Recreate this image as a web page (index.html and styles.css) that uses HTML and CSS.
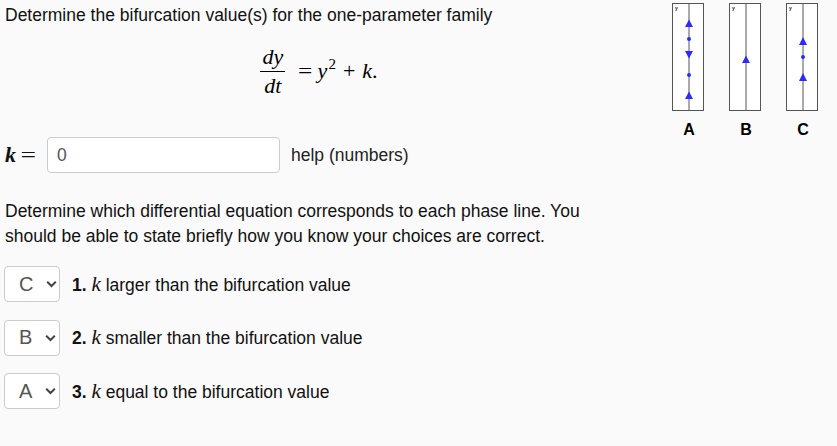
FILE: index.html
```html
<!DOCTYPE html>
<html>
<head>
<meta charset="utf-8">
<link rel="stylesheet" href="styles.css">
</head>
<body>
<div class="page">
  <svg class="phase" width="170" height="140" viewBox="660 0 170 140">
    <g class="box">
      <rect x="672.5" y="3.5" width="31" height="107"/>
      <line x1="689" y1="3.5" x2="689" y2="110.5"/>
      <rect x="729.5" y="3.5" width="31" height="107"/>
      <line x1="746" y1="3.5" x2="746" y2="110.5"/>
      <rect x="786.5" y="3.5" width="31" height="107"/>
      <line x1="803" y1="3.5" x2="803" y2="110.5"/>
    </g>
    <g class="ylab">
      <text x="675" y="10">y</text>
      <text x="732" y="10">y</text>
      <text x="789" y="10">y</text>
    </g>
    <g class="mark">
      <polygon points="689,19.5 685,27 693,27"/>
      <circle cx="689" cy="39" r="2"/>
      <polygon points="689,58.5 685,51 693,51"/>
      <circle cx="689" cy="75" r="2"/>
      <polygon points="689,91.5 685,99 693,99"/>
      <polygon points="746,55.5 742,63 750,63"/>
      <polygon points="803,37 799,45 807,45"/>
      <circle cx="803" cy="57" r="2"/>
      <polygon points="803,73 799,81 807,81"/>
    </g>
    <g class="lab">
      <text x="689" y="135">A</text>
      <text x="746" y="135">B</text>
      <text x="803" y="135">C</text>
    </g>
  </svg>

  <p class="intro">Determine the bifurcation value(s) for the one-parameter family</p>
  <div class="display">
    <span class="math">
      <span class="frac"><span class="num">dy</span><span class="den">dt</span></span>
      <span class="rel">=</span><span class="msup"><span class="mi">y</span><sup class="sup">2</sup></span><span class="op">+</span><span class="mi">k</span><span class="dot">.</span>
    </span>
  </div>

  <div class="answer-row">
    <span class="kvar"><span class="mi">k</span><span class="rel">=</span></span>
    <span class="field">0</span>
    <span class="help">help (numbers)</span>
  </div>

  <p class="para">Determine which differential equation corresponds to each phase line. You should be able to state briefly how you know your choices are correct.</p>

  <div class="matches">
    <div class="match">
      <span class="sel">C<svg class="chev" width="11" height="8" viewBox="0 0 11 8"><path d="M1.2 1.8 L5.5 6 L9.8 1.8"/></svg></span>
      <span class="desc"><b>1.</b> <span class="mi">k</span> larger than the bifurcation value</span>
    </div>
    <div class="match">
      <span class="sel">B<svg class="chev" width="11" height="8" viewBox="0 0 11 8"><path d="M1.2 1.8 L5.5 6 L9.8 1.8"/></svg></span>
      <span class="desc"><b>2.</b> <span class="mi">k</span> smaller than the bifurcation value</span>
    </div>
    <div class="match">
      <span class="sel">A<svg class="chev" width="11" height="8" viewBox="0 0 11 8"><path d="M1.2 1.8 L5.5 6 L9.8 1.8"/></svg></span>
      <span class="desc"><b>3.</b> <span class="mi">k</span> equal to the bifurcation value</span>
    </div>
  </div>
</div>
</body>
</html>
```
FILE: styles.css
```css
html, body {
  margin: 0;
  padding: 0;
  background: #fafafa;
}
body {
  font-family: "Liberation Sans", Arial, sans-serif;
  font-size: 17.5px;
  color: #111;
}
.page {
  padding: 0 5px;
}
.phase {
  float: right;
  margin-right: 2px;
}
.box rect {
  fill: #fff;
  stroke: #555;
  stroke-width: 1;
}
.box line {
  stroke: #555;
  stroke-width: 1;
}
.ylab text {
  font-family: "Liberation Sans", Arial, sans-serif;
  font-size: 5px;
  font-weight: bold;
  fill: #222;
}
.mark polygon, .mark circle {
  fill: #2b2bff;
}
.lab text {
  font-family: "Liberation Sans", Arial, sans-serif;
  font-size: 16px;
  font-weight: bold;
  text-anchor: middle;
  fill: #000;
}
.intro {
  margin: 0;
  padding-top: 3px;
  line-height: 25px;
}
.display {
  display: flex;
  justify-content: center;
  align-items: center;
  height: 86px;
  padding-right: 27px;
}
.math {
  font-family: "Liberation Serif", "Times New Roman", serif;
  font-size: 22px;
  display: inline-flex;
  align-items: center;
  color: #000;
}
.mi, .num, .den {
  font-style: italic;
}
.frac {
  display: inline-flex;
  flex-direction: column;
  align-items: center;
  margin-right: 8px;
}
.num {
  padding: 0 2px 2px;
  border-bottom: 1px solid #000;
  line-height: 24px;
}
.den {
  padding-top: 2px;
  line-height: 24px;
}
.rel {
  display: inline-block;
  margin: 0 6px;
  transform: scaleX(1.15);
}
.msup {
  display: inline-block;
  line-height: 24px;
}
.sup {
  font-size: 15px;
  line-height: 0;
  vertical-align: 9px;
  margin-left: 1px;
}
.op {
  margin: 0 7px;
}
.answer-row {
  display: flex;
  align-items: center;
  margin-top: 23px;
  height: 36px;
}
.kvar {
  font-family: "Liberation Serif", "Times New Roman", serif;
  font-size: 22px;
  width: 42px;
  display: inline-flex;
  align-items: center;
}
.kvar .mi {
  font-weight: bold;
}
.kvar .rel {
  margin: 0 0 0 6px;
  transform: scaleX(1.25);
}
.field {
  box-sizing: border-box;
  width: 233px;
  height: 36px;
  border: 1px solid #ccc;
  border-radius: 4px;
  background: #fff;
  color: #555;
  font-size: 17.5px;
  display: flex;
  align-items: center;
  padding-left: 9px;
}
.help {
  margin-left: 11px;
  color: #222;
}
.para {
  margin: 25.5px 0 0;
  line-height: 25px;
  max-width: 590px;
}
.matches {
  margin-top: 17.5px;
  display: flex;
  flex-direction: column;
  gap: 17.5px;
}
.match {
  display: flex;
  align-items: center;
}
.sel {
  box-sizing: border-box;
  width: 56px;
  height: 36px;
  margin-left: -1px;
  border: 1px solid #ccc;
  border-radius: 4px;
  background: #fff;
  color: #555;
  font-size: 20px;
  display: flex;
  align-items: center;
  padding-left: 14px;
  gap: 13px;
}
.chev path {
  fill: none;
  stroke: #444;
  stroke-width: 2;
}
.desc {
  margin-left: 12px;
}
.desc .mi {
  font-family: "Liberation Serif", "Times New Roman", serif;
  font-size: 21px;
}
```
